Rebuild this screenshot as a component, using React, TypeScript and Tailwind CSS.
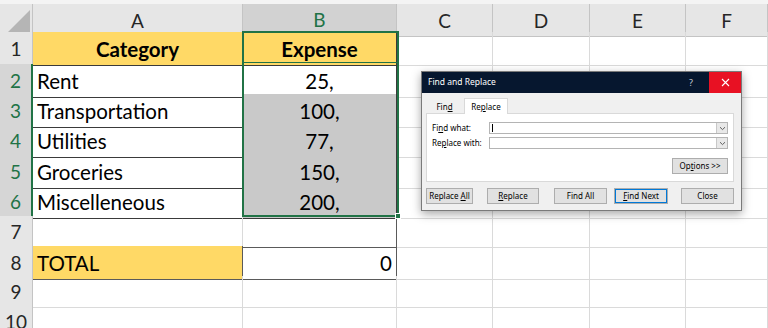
import React from 'react';

type Row = {
  n: number;
  h: string;
  a?: string;
  b?: string;
};

const rows: Row[] = [
  { n: 1, h: 'h-[32px]', a: 'Category', b: 'Expense' },
  { n: 2, h: 'h-[30px]', a: 'Rent', b: '25,' },
  { n: 3, h: 'h-[30px]', a: 'Transportation', b: '100,' },
  { n: 4, h: 'h-[31px]', a: 'Utilities', b: '77,' },
  { n: 5, h: 'h-[30px]', a: 'Groceries', b: '150,' },
  { n: 6, h: 'h-[31px]', a: 'Miscelleneous', b: '200,' },
  { n: 7, h: 'h-[30px]' },
  { n: 8, h: 'h-[30px]', a: 'TOTAL', b: '0' },
  { n: 9, h: 'h-[30px]' },
  { n: 10, h: 'h-[30px]' },
];

const gridCols = 'grid grid-cols-[33px_210px_154px_96px_97px_96px_1fr]';

function Blank() {
  return <div className="border-r border-b border-[#DADADA]" />;
}

function SheetRow({ row }: { row: Row }) {
  const inTable = row.n <= 6;
  const selected = row.n >= 2 && row.n <= 6;
  const isHead = row.n === 1;
  const isTotal = row.n === 8;

  // column A cell
  let aCls = 'flex items-center pt-[2px] pl-[4px] border-r border-b border-[#DADADA]';
  if (inTable) aCls = 'flex items-center pt-[2px] pl-[4px] text-[20.5px] border-r border-b border-[#3a3a3a]';
  if (isHead) aCls = 'flex items-center justify-center pt-[2px] text-[20.5px] font-bold bg-[#FFD966] border-r border-b border-[#3a3a3a]';
  if (isTotal) aCls = 'flex items-center pt-[2px] pl-[4px] text-[20.5px] bg-[#FFD966] border-r border-b border-[#5a5a5a]';

  // column B cell
  let bCls = 'flex items-center justify-center pt-[2px] border-r border-b border-[#DADADA]';
  if (inTable) bCls = 'flex items-center justify-center pt-[2px] text-[20.5px] border-r border-b border-[#3a3a3a]';
  if (isHead) bCls = 'flex items-center justify-center pt-[2px] text-[20.5px] font-bold bg-[#FFD966] border-r border-b border-[#3a3a3a]';
  if (row.n >= 3 && row.n <= 6) bCls = 'flex items-center justify-center pt-[2px] text-[20.5px] bg-[#C9C9C9] border-r border-b border-[#3a3a3a]';
  if (row.n === 7) bCls = 'border-r border-b border-[#5a5a5a]';
  if (isTotal) bCls = 'flex items-center justify-end pt-[2px] pr-[4px] text-[20.5px] border-r border-b border-[#5a5a5a]';

  return (
    <div className={`${gridCols} ${row.h}`}>
      <div
        className={
          selected
            ? 'flex items-center justify-center pt-[2px] bg-[#D6D6D6] text-[#217346] border-r-2 border-r-[#217346] border-b border-b-[#C4C4C4]'
            : 'flex items-center justify-center pt-[2px] bg-[#E6E6E6] text-[#262626] border-r border-b border-[#C4C4C4]'
        }
      >
        {row.n}
      </div>
      <div className={aCls}>{row.a}</div>
      <div className={bCls}>{row.b}</div>
      <Blank />
      <Blank />
      <Blank />
      <Blank />
    </div>
  );
}

function Btn({ children, className }: { children: React.ReactNode; className: string }) {
  return (
    <div
      className={`h-[16px] flex items-center justify-center bg-[#E1E1E1] border border-[#ADADAD] ${className}`}
    >
      {children}
    </div>
  );
}

function Chevron() {
  return (
    <svg width="7" height="5" viewBox="0 0 7 5">
      <path d="M1 1.2 L3.5 3.6 L6 1.2" fill="none" stroke="#606060" strokeWidth="1" />
    </svg>
  );
}

function ComboInput({ cursor }: { cursor?: boolean }) {
  return (
    <div className="flex-1 h-[12px] bg-white border border-[#B4B4B4] flex items-center">
      <div className="flex-1 h-full flex items-center pl-[2px]">
        {cursor && <div className="w-px h-[8px] bg-black" />}
      </div>
      <div className="w-[11px] h-full bg-[#E8E8E8] border-l border-[#C8C8C8] flex items-center justify-center">
        <Chevron />
      </div>
    </div>
  );
}

function FindReplaceDialog() {
  return (
    <div className="absolute left-[421px] top-[71px] w-[321px] bg-[#F0F0F0] border border-[#7A7A7A] shadow-[0_3px_9px_rgba(0,0,0,0.35)] font-['Noto_Sans',sans-serif] text-[8px] leading-none text-black">
      {/* title bar */}
      <div className="h-[21px] bg-[#06172F] flex items-center text-white">
        <span className="flex-1 pl-[6px] text-[8.5px]">Find and Replace</span>
        <span className="w-[16px] mr-[10px] text-center text-[9px] text-[#C8CCD4]">?</span>
        <div className="w-[32px] h-full bg-[#E81123] flex items-center justify-center">
          <svg width="9" height="9" viewBox="0 0 9 9">
            <path d="M1 1 L8 8 M8 1 L1 8" stroke="white" strokeWidth="1.1" />
          </svg>
        </div>
      </div>

      <div className="px-[4px] pt-[5px]">
        {/* tabs */}
        <div className="flex items-end h-[15px] pl-[2px]">
          <div className="w-[33px] h-[13px] flex items-center justify-center">
            <span>
              Fin<span className="underline">d</span>
            </span>
          </div>
          <div className="ml-[3px] w-[44px] h-[16px] bg-white border border-b-0 border-[#D9D9D9] flex items-center justify-center relative top-px">
            <span>
              Re<span className="underline">p</span>lace
            </span>
          </div>
        </div>

        {/* panel */}
        <div className="w-[308px] h-[69px] bg-white border border-[#D9D9D9] px-[5px] pt-[8px]">
          <div className="flex items-center h-[12px]">
            <div className="w-[57px]">
              Fi<span className="underline">n</span>d what:
            </div>
            <ComboInput cursor />
          </div>
          <div className="flex items-center h-[12px] mt-[3px]">
            <div className="w-[57px]">
              Re<span className="underline">p</span>lace with:
            </div>
            <ComboInput />
          </div>
          <div className="flex justify-end mt-[9px]">
            <Btn className="w-[56px]">
              <span>
                Op<span className="underline">t</span>ions &gt;&gt;
              </span>
            </Btn>
          </div>
        </div>

        {/* buttons */}
        <div className="flex mt-[6px] pb-[6px]">
          <Btn className="w-[47px]">
            <span>
              Replace <span className="underline">A</span>ll
            </span>
          </Btn>
          <Btn className="w-[52px] ml-[14px]">
            <span>
              <span className="underline">R</span>eplace
            </span>
          </Btn>
          <Btn className="w-[53px] ml-[15px]">Find All</Btn>
          <Btn className="w-[54px] ml-[7px] border-[#0078D7] outline outline-1 outline-[#0078D7] -outline-offset-2">
            <span>
              <span className="underline">F</span>ind Next
            </span>
          </Btn>
          <Btn className="w-[53px] ml-[13px]">Close</Btn>
        </div>
      </div>
    </div>
  );
}

export default function App() {
  const cols = ['A', 'B', 'C', 'D', 'E', 'F'];

  return (
    <div className="relative w-[768px] h-[328px] overflow-hidden bg-white font-[Lato,sans-serif] text-[19px] text-black">
      <div className="h-[4px] bg-[#F4F4F4]" />

      {/* column headers */}
      <div className={`${gridCols} h-[28px]`}>
        <div className="bg-[#E6E6E6] border-r border-b border-[#C4C4C4] flex items-end justify-end pr-[2px] pb-[3px]">
          <svg width="23" height="23" viewBox="0 0 23 23">
            <polygon points="23,0 23,23 0,23" fill="#B5B5B5" />
          </svg>
        </div>
        {cols.map((c) =>
          c === 'B' ? (
            <div
              key={c}
              className="bg-[#D2D2D2] text-[#217346] border-r border-[#C4C4C4] border-b-2 border-b-[#217346] flex items-center justify-center pt-[2px]"
            >
              {c}
            </div>
          ) : (
            <div
              key={c}
              className="bg-[#E6E6E6] text-[#262626] border-r border-b border-[#C4C4C4] flex items-center justify-center pt-[2px]"
            >
              {c}
            </div>
          )
        )}
      </div>

      {rows.map((r) => (
        <SheetRow key={r.n} row={r} />
      ))}

      {/* selection outline over B1:B6 */}
      <div className="absolute left-[242px] top-[31px] w-[157px] h-[186px] border-2 border-[#217346] pointer-events-none" />
      <div className="absolute left-[242px] top-[62px] w-[157px] h-px bg-[#217346]" />
      <div className="absolute left-[395px] top-[213px] w-[6px] h-[6px] bg-[#217346] border border-white" />

      <FindReplaceDialog />
    </div>
  );
}
